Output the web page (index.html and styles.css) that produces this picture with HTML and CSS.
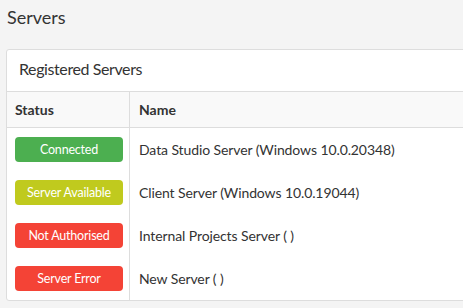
FILE: index.html
```html
<!DOCTYPE html>
<html>

<head>
    <title>Servers</title>
    <link rel="stylesheet" href="styles.css">
</head>

<body>
    <div class="page">
        <h1 class="page-title">Servers</h1>

        <div class="card">
            <div class="card-header">Registered Servers</div>
            <table class="server-table">
                <thead>
                    <tr>
                        <th class="col-status">Status</th>
                        <th>Name</th>
                    </tr>
                </thead>
                <tbody>
                    <tr>
                        <td class="col-status"><span class="badge badge-connected">Connected</span></td>
                        <td>Data Studio Server (Windows 10.0.20348)</td>
                    </tr>
                    <tr>
                        <td class="col-status"><span class="badge badge-available">Server Available</span></td>
                        <td>Client Server (Windows 10.0.19044)</td>
                    </tr>
                    <tr>
                        <td class="col-status"><span class="badge badge-error">Not Authorised</span></td>
                        <td>Internal Projects Server ( )</td>
                    </tr>
                    <tr>
                        <td class="col-status"><span class="badge badge-error">Server Error</span></td>
                        <td>New Server ( )</td>
                    </tr>
                </tbody>
            </table>
        </div>
    </div>
</body>

</html>
```

FILE: styles.css
```css
/* Page basics */
body {
    margin: 0;
    background: #f4f4f4;
    font-family: Lato, "Open Sans", sans-serif;
    color: #333;
}

.page {
    padding: 6px 0 0 6px;
    overflow: hidden;
}

.page-title {
    margin: 0 0 20px 1px;
    font-size: 18px;
    font-weight: normal;
    line-height: 23px;
}

/* Card */
.card {
    width: 480px;
    background: #fff;
    border: 1px solid #ddd;
    border-radius: 3px;
}

.card-header {
    padding: 9px 12px 12px;
    font-size: 16px;
    line-height: 20px;
    letter-spacing: -0.4px;
    border-bottom: 1px solid #ddd;
}

/* Servers table */
.server-table {
    width: 100%;
    border-collapse: collapse;
    font-size: 14px;
}

.server-table th {
    text-align: left;
    font-weight: bold;
    background: #f9f9f9;
    height: 35px;
    padding: 0 9px;
    border-bottom: 1px solid #ddd;
}

.server-table td {
    height: 43px;
    padding: 0 9px;
    letter-spacing: -0.1px;
}

.server-table .col-status {
    width: 108px;
    padding: 0 6px 0 8px;
    border-right: 1px solid #ddd;
}

/* Status badges */
.badge {
    display: block;
    width: 108px;
    height: 25px;
    line-height: 25px;
    border-radius: 4px;
    text-align: center;
    font-size: 12.5px;
    letter-spacing: -0.2px;
    color: #fff;
}

.badge-connected {
    background: #4caf50;
}

.badge-available {
    background: #c0ca1e;
}

.badge-error {
    background: #f44336;
}
```
